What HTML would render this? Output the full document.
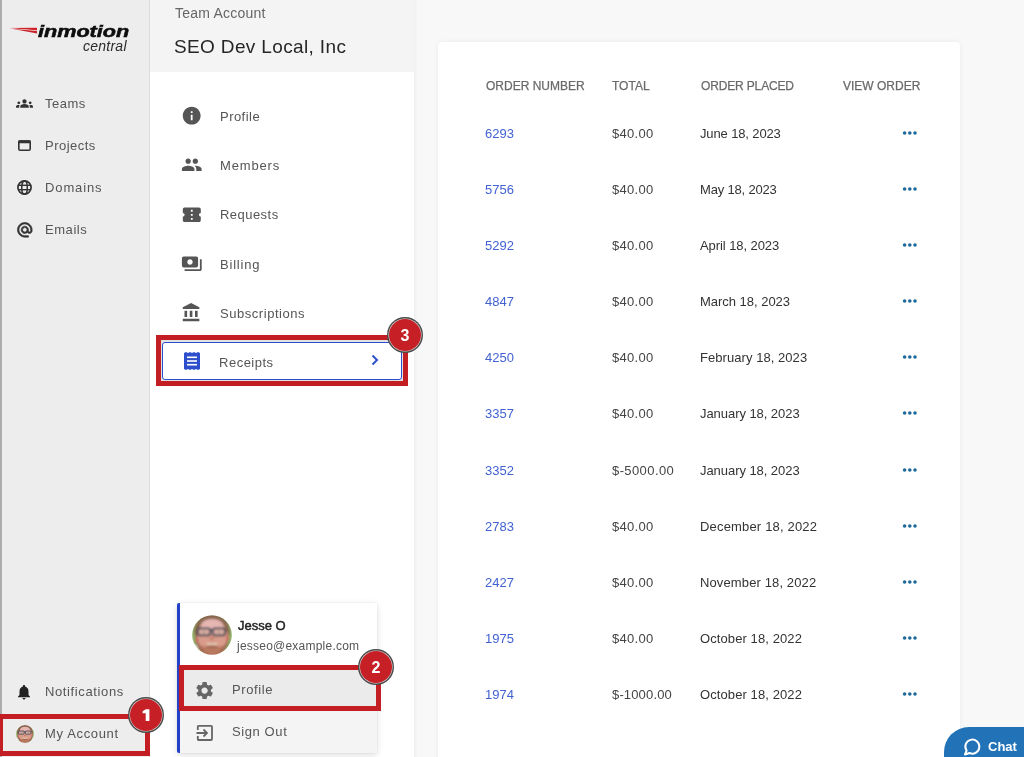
<!DOCTYPE html><html><head><meta charset="utf-8"><style>
*{margin:0;padding:0;box-sizing:border-box}
html,body{width:1024px;height:757px;overflow:hidden;background:#f8f8f8;font-family:"Liberation Sans",sans-serif}
.t{position:absolute;white-space:nowrap;will-change:transform}
.a{position:absolute}
svg{position:absolute;overflow:visible}
.badge{position:absolute;width:32px;height:32px;border-radius:50%;background:#c62026;box-shadow:0 0 0 0.6px rgba(255,255,255,.8),0 0 0 2px #4a4a4a;color:#fff;font:bold 16px/32px "Liberation Sans",sans-serif;text-align:center;padding-top:1px;will-change:transform}
</style></head><body>
<div class="a" style="left:0;top:0;width:149px;height:757px;background:#ededed"></div>
<div class="a" style="left:0;top:0;width:2px;height:757px;background:#adadad"></div>
<div class="a" style="left:149px;top:0;width:1px;height:757px;background:#dcdcdc"></div>
<svg style="left:0;top:0" width="150" height="60"><polygon points="9,28 37,27.8 37,30.3" fill="#d32027"/><polygon points="12,28.8 37,31 37,33.6" fill="#c8242b"/></svg>
<div class="t" style="left:37.5px;top:23px;font-size:17px;line-height:17px;color:#0d0d0d;font-weight:bold;letter-spacing:0px;font-style:italic;transform-origin:0 0;transform:scaleX(1.27);-webkit-text-stroke:0.55px #0d0d0d;">inmotion</div>

<div class="t" style="left:83px;top:39px;font-size:14px;line-height:14px;color:#2a2a2a;font-weight:normal;letter-spacing:0.25px;font-style:italic;">central</div>

<div class="t" style="left:45.05px;top:97px;font-size:13px;line-height:13px;color:#555;font-weight:normal;letter-spacing:0.521px;">Teams</div>

<div class="t" style="left:45.4px;top:139px;font-size:13px;line-height:13px;color:#555;font-weight:normal;letter-spacing:0.48px;">Projects</div>

<div class="t" style="left:44.76px;top:181px;font-size:13px;line-height:13px;color:#555;font-weight:normal;letter-spacing:0.879px;">Domains</div>

<div class="t" style="left:44.76px;top:223px;font-size:13px;line-height:13px;color:#555;font-weight:normal;letter-spacing:0.559px;">Emails</div>

<div class="t" style="left:45.4px;top:685px;font-size:13px;line-height:13px;color:#555;font-weight:normal;letter-spacing:0.618px;">Notifications</div>

<div class="t" style="left:45.4px;top:727px;font-size:13px;line-height:13px;color:#555;font-weight:normal;letter-spacing:0.647px;">My Account</div>

<svg style="left:16px;top:94.6px" width="17" height="17" viewBox="0 0 24 24"><path fill="#333" d="M12 12.75c1.63 0 3.07.39 4.24.9 1.080.48 1.76 1.56 1.76 2.73V18H6v-1.61c0-1.18.68-2.26 1.76-2.73 1.17-.52 2.61-.91 4.24-.91zM4 13c1.1 0 2-.9 2-2s-.9-2-2-2-2 .9-2 2 .9 2 2 2zm1.13 1.1c-.37-.06-.74-.1-1.13-.1-.99 0-1.93.21-2.78.58C.48 14.9 0 15.62 0 16.43V18h4.5v-1.61c0-.83.23-1.610.63-2.29zM20 13c1.1 0 2-.9 2-2s-.9-2-2-2-2 .9-2 2 .9 2 2 2zm4 3.43c0-.81-.48-1.53-1.22-1.85-.85-.37-1.79-.58-2.78-.58-.39 0-.76.04-1.13.1.4.68.63 1.46.63 2.29V18H24v-1.57zM12 6c1.66 0 3 1.34 3 3s-1.34 3-3 3-3-1.34-3-3 1.34-3 3-3z"/></svg>
<svg style="left:18px;top:140px" width="13" height="11"><rect x="0.8" y="1" width="11.4" height="9.2" rx="1.3" fill="none" stroke="#333" stroke-width="1.6"/><rect x="0.2" y="0.2" width="12.6" height="3" rx="1.2" fill="#333"/></svg>
<svg style="left:16px;top:179px" width="17" height="17" viewBox="0 0 17 17"><circle cx="8.5" cy="8.5" r="6.6" fill="none" stroke="#333" stroke-width="1.7"/><ellipse cx="8.5" cy="8.5" rx="2.8" ry="6.6" fill="none" stroke="#333" stroke-width="1.5"/><line x1="2" y1="6.3" x2="15" y2="6.3" stroke="#333" stroke-width="1.4"/><line x1="2" y1="10.7" x2="15" y2="10.7" stroke="#333" stroke-width="1.4"/></svg>
<svg style="left:15.5px;top:221px" width="17.6" height="17.6" viewBox="0 0 24 24"><path fill="#333" stroke="#333" stroke-width="0.9" d="M12 2C6.480 2 2 6.480 2 12s4.48 10 10 10h5v-2h-5c-4.34 0-8-3.66-8-8s3.66-8 8-8 8 3.66 8 8v1.43c0 .79-.71 1.57-1.5 1.57s-1.5-.78-1.5-1.57V12c0-2.76-2.24-5-5-5s-5 2.24-5 5 2.24 5 5 5c1.38 0 2.64-.56 3.54-1.47.65.89 1.77 1.47 2.96 1.47 1.97 0 3.5-1.6 3.5-3.57V12c0-5.52-4.48-10-10-10zm0 13c-1.66 0-3-1.34-3-3s1.34-3 3-3 3 1.34 3 3-1.34 3-3 3z"/></svg>
<svg style="left:15px;top:683px" width="18" height="18" viewBox="0 0 24 24"><path fill="#222" d="M12 22c1.1 0 2-.9 2-2h-4c0 1.1.89 2 2 2zm6-6v-5c0-3.07-1.64-5.64-4.5-6.32V4c0-.83-.67-1.5-1.5-1.5s-1.5.67-1.5 1.5v.68C7.63 5.36 6 7.920 6 11v5l-2 2v1h16v-1l-2-2z"/></svg>
<div class="a" style="left:-2px;top:714px;width:152px;height:42px;border:5px solid #c41e25;border-left-width:5px"></div>
<div class="a" style="left:150px;top:0;width:264px;height:757px;background:#fff"></div>
<div class="a" style="left:150px;top:0;width:264px;height:72px;background:#f4f4f4"></div>
<div class="a" style="left:414px;top:0;width:4px;height:757px;background:linear-gradient(90deg,rgba(0,0,0,.035),rgba(0,0,0,0))"></div>
<div class="t" style="left:174.6px;top:6px;font-size:14px;line-height:14px;color:#666;font-weight:normal;letter-spacing:0.218px;">Team Account</div>

<div class="t" style="left:174.47px;top:37px;font-size:19px;line-height:19px;color:#262626;font-weight:normal;letter-spacing:0.361px;">SEO Dev Local, Inc</div>

<svg style="left:181.1px;top:104.8px" width="21.4" height="21.4" viewBox="0 0 24 24"><path fill="#555" d="M12 2C6.48 2 2 6.48 2 12s4.48 10 10 10 10-4.48 10-10S17.52 2 12 2zm1 15h-2v-6h2v6zm0-8h-2V7h2v2z"/></svg>
<svg style="left:181.2px;top:154.3px" width="21.5" height="21.5" viewBox="0 0 24 24"><path fill="#555" d="M16 11c1.66 0 2.99-1.34 2.99-3S17.66 5 16 5c-1.66 0-3 1.34-3 3s1.34 3 3 3zm-8 0c1.66 0 2.99-1.34 2.99-3S9.66 5 8 5C6.34 5 5 6.34 5 8s1.34 3 3 3zm0 2c-2.33 0-7 1.17-7 3.5V19h14v-2.5c0-2.33-4.67-3.5-7-3.5zm8 0c-.29 0-.62.02-.97.05 1.16.84 1.97 1.97 1.97 3.45V19h6v-2.5c0-2.33-4.67-3.5-7-3.5z"/></svg>
<svg style="left:181.1px;top:204px" width="21.6" height="21.6" viewBox="0 0 24 24"><path fill="#555" d="M22 10V6c0-1.11-.9-2-2-2H4c-1.1 0-1.99.89-1.99 2v4c1.1 0 1.99.9 1.99 2s-.89 2-2 2v4c0 1.1.9 2 2 2h16c1.1 0 2-.9 2-2v-4c-1.1 0-2-.9-2-2s.9-2 2-2zm-9 7.5h-2v-2h2v2zm0-4.5h-2v-2h2v2zm0-4.5h-2v-2h2v2z"/></svg>
<svg style="left:181.2px;top:252.5px" width="21.6" height="21.6" viewBox="0 0 24 24"><path fill="#555" d="M19 14V6c0-1.1-.9-2-2-2H3c-1.1 0-2 .9-2 2v8c0 1.1.9 2 2 2h14c1.1 0 2-.9 2-2zm-9-1c-1.66 0-3-1.34-3-3s1.34-3 3-3 3 1.34 3 3-1.34 3-3 3zm13-6v11c0 1.1-.9 2-2 2H4v-2h17V7h2z"/></svg>
<svg style="left:181px;top:302.2px" width="21" height="21" viewBox="0 0 24 24"><path fill="#555" d="M4 10v7h3v-7H4zm6 0v7h3v-7h-3zM2 22h19v-3H2v3zm14-12v7h3v-7h-3zm-4.5-9L2 6v2h19V6l-9.5-5z"/></svg>
<div class="a" style="left:156px;top:335px;width:252px;height:51px;border:5px solid #c41e25;background:#e2e2e2"></div>
<div class="a" style="left:162px;top:342px;width:240px;height:37.5px;border:1.8px solid #2e4fcc;border-radius:3px;background:#fff"></div>
<svg style="left:184px;top:352px" width="16" height="18" viewBox="0 0 16 18"><path fill="#2e4fcc" d="M0 1 L2 0 L4 1 L6 0 L8 1 L10 0 L12 1 L14 0 L16 1 V17 L14 18 L12 17 L10 18 L8 17 L6 18 L4 17 L2 18 L0 17 Z"/><rect x="3" y="4.5" width="10" height="1.6" fill="#fff"/><rect x="3" y="8.2" width="10" height="1.6" fill="#fff"/><rect x="3" y="11.9" width="10" height="1.6" fill="#fff"/></svg>
<svg style="left:370px;top:353px" width="10" height="14"><path d="M2.5 2.5 L7 7 L2.5 11.5" fill="none" stroke="#2e4fcc" stroke-width="2"/></svg>
<div class="t" style="left:220.0px;top:110px;font-size:13px;line-height:13px;color:#555;font-weight:normal;letter-spacing:0.462px;">Profile</div>

<div class="t" style="left:220.0px;top:159px;font-size:13px;line-height:13px;color:#555;font-weight:normal;letter-spacing:0.846px;">Members</div>

<div class="t" style="left:220.0px;top:208px;font-size:13px;line-height:13px;color:#555;font-weight:normal;letter-spacing:0.46px;">Requests</div>

<div class="t" style="left:220.0px;top:258px;font-size:13px;line-height:13px;color:#555;font-weight:normal;letter-spacing:0.796px;">Billing</div>

<div class="t" style="left:219.53px;top:307px;font-size:13px;line-height:13px;color:#555;font-weight:normal;letter-spacing:0.547px;">Subscriptions</div>

<div class="t" style="left:219.44px;top:356px;font-size:13px;line-height:13px;color:#555;font-weight:normal;letter-spacing:0.505px;">Receipts</div>

<div class="a" style="left:177px;top:602.5px;width:200px;height:150.5px;background:#fff;border-radius:2px 0 0 2px;box-shadow:0 2px 7px rgba(0,0,0,.13),0 0 1.5px rgba(0,0,0,.12)"></div>
<div class="a" style="left:180px;top:711px;width:197px;height:42px;background:#f4f4f4"></div>
<div class="a" style="left:177px;top:602.5px;width:3px;height:150.5px;background:#2340c8;border-radius:2px 0 0 2px"></div>
<svg style="left:192px;top:614.5px" width="40" height="40" viewBox="0 0 40 40"><defs><clipPath id="ca"><circle cx="20" cy="20" r="19.8"/></clipPath><filter id="fa" x="-20%" y="-20%" width="140%" height="140%"><feGaussianBlur stdDeviation="0.8"/></filter></defs><g clip-path="url(#ca)"><g filter="url(#fa)"><rect x="-4" y="-4" width="48" height="48" fill="#8fb26a"/><rect x="-4" y="30" width="10" height="16" fill="#dfe8d6"/><ellipse cx="20" cy="21" rx="17" ry="22" fill="#9a6a55"/><ellipse cx="20.5" cy="21" rx="15" ry="17" fill="#d99c8a"/><ellipse cx="20" cy="11" rx="11" ry="8" fill="#e6b6b2"/><path d="M2 20 Q2 0 20 -1 Q38 0 38 20 L34 16 Q32 4 20 4 Q8 4 6 16 Z" fill="#8a6650"/><ellipse cx="5" cy="25" rx="1.6" ry="2.6" fill="#cf6a66"/><ellipse cx="35.5" cy="23" rx="1.6" ry="2.6" fill="#cf6a66"/><path d="M5 24 Q7 41 20 41 Q33 41 35 24 Q33 33 27 32 Q20 27 13 32 Q7 33 5 24 Z" fill="#a86a52"/><path d="M10 30 Q20 37 30 30 Q28 40 20 40 Q12 40 10 30 Z" fill="#c08068" opacity=".7"/><rect x="5.8" y="13.3" width="12.4" height="7" rx="2" fill="#dcaaa0" stroke="#354050" stroke-width="1.8"/><rect x="20.8" y="13.3" width="12.2" height="7" rx="2" fill="#dcaaa0" stroke="#354050" stroke-width="1.8"/><rect x="17.5" y="14.3" width="4" height="1.6" fill="#3d4a5c"/><circle cx="12" cy="17" r="1" fill="#7f9a80"/><circle cx="27" cy="17" r="1" fill="#7f9a80"/><ellipse cx="20" cy="23.5" rx="2.4" ry="1.6" fill="#c97b6c"/><path d="M15 28.8 Q20 30.6 25 28.8 Q20 30 15 28.8 Z" fill="#efe2cc" stroke="#efe2cc" stroke-width="1"/></g></g></svg>
<svg style="left:16px;top:725px" width="18" height="18" viewBox="0 0 40 40"><defs><clipPath id="cb"><circle cx="20" cy="20" r="19.8"/></clipPath><filter id="fb" x="-20%" y="-20%" width="140%" height="140%"><feGaussianBlur stdDeviation="0.8"/></filter></defs><g clip-path="url(#cb)"><g filter="url(#fb)"><rect x="-4" y="-4" width="48" height="48" fill="#8fb26a"/><rect x="-4" y="30" width="10" height="16" fill="#dfe8d6"/><ellipse cx="20" cy="21" rx="17" ry="22" fill="#9a6a55"/><ellipse cx="20.5" cy="21" rx="15" ry="17" fill="#d99c8a"/><ellipse cx="20" cy="11" rx="11" ry="8" fill="#e6b6b2"/><path d="M2 20 Q2 0 20 -1 Q38 0 38 20 L34 16 Q32 4 20 4 Q8 4 6 16 Z" fill="#8a6650"/><ellipse cx="5" cy="25" rx="1.6" ry="2.6" fill="#cf6a66"/><ellipse cx="35.5" cy="23" rx="1.6" ry="2.6" fill="#cf6a66"/><path d="M5 24 Q7 41 20 41 Q33 41 35 24 Q33 33 27 32 Q20 27 13 32 Q7 33 5 24 Z" fill="#a86a52"/><path d="M10 30 Q20 37 30 30 Q28 40 20 40 Q12 40 10 30 Z" fill="#c08068" opacity=".7"/><rect x="5.8" y="13.3" width="12.4" height="7" rx="2" fill="#dcaaa0" stroke="#354050" stroke-width="1.8"/><rect x="20.8" y="13.3" width="12.2" height="7" rx="2" fill="#dcaaa0" stroke="#354050" stroke-width="1.8"/><rect x="17.5" y="14.3" width="4" height="1.6" fill="#3d4a5c"/><circle cx="12" cy="17" r="1" fill="#7f9a80"/><circle cx="27" cy="17" r="1" fill="#7f9a80"/><ellipse cx="20" cy="23.5" rx="2.4" ry="1.6" fill="#c97b6c"/><path d="M15 28.8 Q20 30.6 25 28.8 Q20 30 15 28.8 Z" fill="#efe2cc" stroke="#efe2cc" stroke-width="1"/></g></g></svg>
<div class="t" style="left:237.81px;top:619px;font-size:13px;line-height:13px;color:#222;font-weight:normal;letter-spacing:-0.007px;-webkit-text-stroke:0.45px #222;">Jesse O</div>

<div class="t" style="left:236.93px;top:640px;font-size:12px;line-height:12px;color:#555;font-weight:normal;letter-spacing:0.226px;">jesseo@example.com</div>

<div class="a" style="left:179px;top:665px;width:202px;height:46px;border:5px solid #c41e25;background:#ebebeb"></div>
<div class="t" style="left:231.76px;top:683px;font-size:13px;line-height:13px;color:#555;font-weight:normal;letter-spacing:0.595px;">Profile</div>

<div class="t" style="left:231.85px;top:725px;font-size:13px;line-height:13px;color:#555;font-weight:normal;letter-spacing:0.597px;">Sign Out</div>

<svg style="left:194px;top:680px" width="21.2" height="21.2" viewBox="0 0 24 24"><path fill="#666" d="M19.14 12.94c.04-.3.06-.61.06-.94 0-.32-.02-.64-.07-.94l2.03-1.58c.18-.14.23-.41.12-.61l-1.92-3.32c-.12-.22-.37-.29-.59-.22l-2.39.96c-.5-.38-1.03-.7-1.62-.94l-.36-2.54c-.04-.24-.24-.41-.48-.41h-3.84c-.24 0-.43.17-.47.41l-.36 2.54c-.59.24-1.13.57-1.62.94l-2.39-.96c-.22-.08-.47 0-.59.22L2.74 8.87c-.12.21-.08.47.12.61l2.03 1.58c-.05.3-.09.63-.09.94s.02.64.07.94l-2.03 1.58c-.18.14-.23.41-.12.61l1.92 3.32c.12.22.37.29.59.22l2.39-.96c.5.38 1.03.7 1.62.94l.36 2.54c.05.24.24.41.48.41h3.84c.24 0 .44-.17.47-.41l.36-2.54c.59-.24 1.13-.56 1.62-.94l2.39.96c.22.08.47 0 .59-.22l1.92-3.32c.12-.22.07-.47-.12-.61l-2.01-1.58zM12 15.6c-1.98 0-3.6-1.62-3.6-3.6s1.62-3.6 3.6-3.6 3.6 1.62 3.6 3.6-1.62 3.6-3.6 3.6z"/></svg>
<svg style="left:196px;top:724px" width="18" height="18"><path d="M1.8 6 V2.5 Q1.8 1.8 2.5 1.8 H15 Q16 1.8 16 2.8 V15 Q16 16 15 16 H2.5 Q1.8 16 1.8 15.2 V12" fill="none" stroke="#666" stroke-width="1.8"/><path d="M0.5 9 H11 M7.5 5.5 L11 9 L7.5 12.5" fill="none" stroke="#666" stroke-width="1.8"/></svg>
<div class="a" style="left:438px;top:42px;width:522px;height:760px;background:#fff;border-radius:4px;box-shadow:0 0 5px rgba(0,0,0,.06)"></div>
<div class="t" style="left:486px;top:80px;font-size:12px;line-height:12px;color:#6a6a6a;font-weight:normal;letter-spacing:0px;-webkit-text-stroke:0.25px #6a6a6a;">ORDER NUMBER</div>

<div class="t" style="left:612px;top:80px;font-size:12px;line-height:12px;color:#6a6a6a;font-weight:normal;letter-spacing:0px;-webkit-text-stroke:0.25px #6a6a6a;">TOTAL</div>

<div class="t" style="left:701px;top:80px;font-size:12px;line-height:12px;color:#6a6a6a;font-weight:normal;letter-spacing:-0.15px;-webkit-text-stroke:0.25px #6a6a6a;">ORDER PLACED</div>

<div class="t" style="left:843px;top:80px;font-size:12px;line-height:12px;color:#6a6a6a;font-weight:normal;letter-spacing:0px;-webkit-text-stroke:0.25px #6a6a6a;">VIEW ORDER</div>

<div class="t" style="left:485px;top:127px;font-size:13px;line-height:13px;color:#4262d2;font-weight:normal;letter-spacing:0px;">6293</div>

<div class="t" style="left:612px;top:127px;font-size:13px;line-height:13px;color:#444;font-weight:normal;letter-spacing:0.3px;">$40.00</div>

<div class="t" style="left:700.0px;top:127px;font-size:13px;line-height:13px;color:#333;font-weight:normal;letter-spacing:-0.13px;">June 18, 2023</div>

<svg style="left:900px;top:129.8px" width="20" height="6"><circle cx="4.6" cy="3" r="1.8" fill="#1d6a9a"/><circle cx="9.8" cy="3" r="1.8" fill="#1d6a9a"/><circle cx="15" cy="3" r="1.8" fill="#1d6a9a"/></svg>
<div class="t" style="left:485px;top:183px;font-size:13px;line-height:13px;color:#4262d2;font-weight:normal;letter-spacing:0px;">5756</div>

<div class="t" style="left:612px;top:183px;font-size:13px;line-height:13px;color:#444;font-weight:normal;letter-spacing:0.3px;">$40.00</div>

<div class="t" style="left:700.0px;top:183px;font-size:13px;line-height:13px;color:#333;font-weight:normal;letter-spacing:-0.176px;">May 18, 2023</div>

<svg style="left:900px;top:185.8px" width="20" height="6"><circle cx="4.6" cy="3" r="1.8" fill="#1d6a9a"/><circle cx="9.8" cy="3" r="1.8" fill="#1d6a9a"/><circle cx="15" cy="3" r="1.8" fill="#1d6a9a"/></svg>
<div class="t" style="left:485px;top:239px;font-size:13px;line-height:13px;color:#4262d2;font-weight:normal;letter-spacing:0px;">5292</div>

<div class="t" style="left:612px;top:239px;font-size:13px;line-height:13px;color:#444;font-weight:normal;letter-spacing:0.3px;">$40.00</div>

<div class="t" style="left:700.0px;top:239px;font-size:13px;line-height:13px;color:#333;font-weight:normal;letter-spacing:-0.076px;">April 18, 2023</div>

<svg style="left:900px;top:241.8px" width="20" height="6"><circle cx="4.6" cy="3" r="1.8" fill="#1d6a9a"/><circle cx="9.8" cy="3" r="1.8" fill="#1d6a9a"/><circle cx="15" cy="3" r="1.8" fill="#1d6a9a"/></svg>
<div class="t" style="left:485px;top:295px;font-size:13px;line-height:13px;color:#4262d2;font-weight:normal;letter-spacing:0px;">4847</div>

<div class="t" style="left:612px;top:295px;font-size:13px;line-height:13px;color:#444;font-weight:normal;letter-spacing:0.3px;">$40.00</div>

<div class="t" style="left:700.0px;top:295px;font-size:13px;line-height:13px;color:#333;font-weight:normal;letter-spacing:-0.024px;">March 18, 2023</div>

<svg style="left:900px;top:297.8px" width="20" height="6"><circle cx="4.6" cy="3" r="1.8" fill="#1d6a9a"/><circle cx="9.8" cy="3" r="1.8" fill="#1d6a9a"/><circle cx="15" cy="3" r="1.8" fill="#1d6a9a"/></svg>
<div class="t" style="left:485px;top:351px;font-size:13px;line-height:13px;color:#4262d2;font-weight:normal;letter-spacing:0px;">4250</div>

<div class="t" style="left:612px;top:351px;font-size:13px;line-height:13px;color:#444;font-weight:normal;letter-spacing:0.3px;">$40.00</div>

<div class="t" style="left:700.0px;top:351px;font-size:13px;line-height:13px;color:#333;font-weight:normal;letter-spacing:0.056px;">February 18, 2023</div>

<svg style="left:900px;top:353.8px" width="20" height="6"><circle cx="4.6" cy="3" r="1.8" fill="#1d6a9a"/><circle cx="9.8" cy="3" r="1.8" fill="#1d6a9a"/><circle cx="15" cy="3" r="1.8" fill="#1d6a9a"/></svg>
<div class="t" style="left:485px;top:407px;font-size:13px;line-height:13px;color:#4262d2;font-weight:normal;letter-spacing:0px;">3357</div>

<div class="t" style="left:612px;top:407px;font-size:13px;line-height:13px;color:#444;font-weight:normal;letter-spacing:0.3px;">$40.00</div>

<div class="t" style="left:700.0px;top:407px;font-size:13px;line-height:13px;color:#333;font-weight:normal;letter-spacing:-0.057px;">January 18, 2023</div>

<svg style="left:900px;top:409.8px" width="20" height="6"><circle cx="4.6" cy="3" r="1.8" fill="#1d6a9a"/><circle cx="9.8" cy="3" r="1.8" fill="#1d6a9a"/><circle cx="15" cy="3" r="1.8" fill="#1d6a9a"/></svg>
<div class="t" style="left:485px;top:464px;font-size:13px;line-height:13px;color:#4262d2;font-weight:normal;letter-spacing:0px;">3352</div>

<div class="t" style="left:612px;top:464px;font-size:13px;line-height:13px;color:#444;font-weight:normal;letter-spacing:0.4px;">$-5000.00</div>

<div class="t" style="left:700.0px;top:464px;font-size:13px;line-height:13px;color:#333;font-weight:normal;letter-spacing:-0.057px;">January 18, 2023</div>

<svg style="left:900px;top:466.8px" width="20" height="6"><circle cx="4.6" cy="3" r="1.8" fill="#1d6a9a"/><circle cx="9.8" cy="3" r="1.8" fill="#1d6a9a"/><circle cx="15" cy="3" r="1.8" fill="#1d6a9a"/></svg>
<div class="t" style="left:485px;top:520px;font-size:13px;line-height:13px;color:#4262d2;font-weight:normal;letter-spacing:0px;">2783</div>

<div class="t" style="left:612px;top:520px;font-size:13px;line-height:13px;color:#444;font-weight:normal;letter-spacing:0.3px;">$40.00</div>

<div class="t" style="left:700.0px;top:520px;font-size:13px;line-height:13px;color:#333;font-weight:normal;letter-spacing:0.173px;">December 18, 2022</div>

<svg style="left:900px;top:522.8px" width="20" height="6"><circle cx="4.6" cy="3" r="1.8" fill="#1d6a9a"/><circle cx="9.8" cy="3" r="1.8" fill="#1d6a9a"/><circle cx="15" cy="3" r="1.8" fill="#1d6a9a"/></svg>
<div class="t" style="left:485px;top:576px;font-size:13px;line-height:13px;color:#4262d2;font-weight:normal;letter-spacing:0px;">2427</div>

<div class="t" style="left:612px;top:576px;font-size:13px;line-height:13px;color:#444;font-weight:normal;letter-spacing:0.3px;">$40.00</div>

<div class="t" style="left:700.0px;top:576px;font-size:13px;line-height:13px;color:#333;font-weight:normal;letter-spacing:0.123px;">November 18, 2022</div>

<svg style="left:900px;top:578.8px" width="20" height="6"><circle cx="4.6" cy="3" r="1.8" fill="#1d6a9a"/><circle cx="9.8" cy="3" r="1.8" fill="#1d6a9a"/><circle cx="15" cy="3" r="1.8" fill="#1d6a9a"/></svg>
<div class="t" style="left:485px;top:632px;font-size:13px;line-height:13px;color:#4262d2;font-weight:normal;letter-spacing:0px;">1975</div>

<div class="t" style="left:612px;top:632px;font-size:13px;line-height:13px;color:#444;font-weight:normal;letter-spacing:0.3px;">$40.00</div>

<div class="t" style="left:700.0px;top:632px;font-size:13px;line-height:13px;color:#333;font-weight:normal;letter-spacing:0.095px;">October 18, 2022</div>

<svg style="left:900px;top:634.8px" width="20" height="6"><circle cx="4.6" cy="3" r="1.8" fill="#1d6a9a"/><circle cx="9.8" cy="3" r="1.8" fill="#1d6a9a"/><circle cx="15" cy="3" r="1.8" fill="#1d6a9a"/></svg>
<div class="t" style="left:485px;top:688px;font-size:13px;line-height:13px;color:#4262d2;font-weight:normal;letter-spacing:0px;">1974</div>

<div class="t" style="left:612px;top:688px;font-size:13px;line-height:13px;color:#444;font-weight:normal;letter-spacing:0.15px;">$-1000.00</div>

<div class="t" style="left:700.0px;top:688px;font-size:13px;line-height:13px;color:#333;font-weight:normal;letter-spacing:0.095px;">October 18, 2022</div>

<svg style="left:900px;top:690.8px" width="20" height="6"><circle cx="4.6" cy="3" r="1.8" fill="#1d6a9a"/><circle cx="9.8" cy="3" r="1.8" fill="#1d6a9a"/><circle cx="15" cy="3" r="1.8" fill="#1d6a9a"/></svg>
<div class="a" style="left:944px;top:727px;width:110px;height:60px;border-radius:25px;background:#2272b8"></div>
<svg style="left:962px;top:737px" width="20" height="20" viewBox="0 0 20 20"><path d="M3 17.5 L4.6 13.6 A7 7 0 1 1 7.5 16 Z" fill="none" stroke="#fff" stroke-width="2" stroke-linejoin="round"/></svg>
<div class="t" style="left:988px;top:740px;font-size:13px;line-height:13px;color:#fff;font-weight:bold;letter-spacing:0px;">Chat</div>

<div class="badge" style="left:130px;top:698.6px"></div>
<svg style="left:0;top:0" width="1" height="1"><path d="M142.6 711.2 L145.8 709.2 L149.4 709.2 L149.4 721 L145.7 721 L145.7 713.2 L142.6 713.2 Z" fill="#fff"/></svg>
<div class="badge" style="left:388.8px;top:318.9px">3</div>
<div class="badge" style="left:359.9px;top:650.6px">2</div>
</body></html>
